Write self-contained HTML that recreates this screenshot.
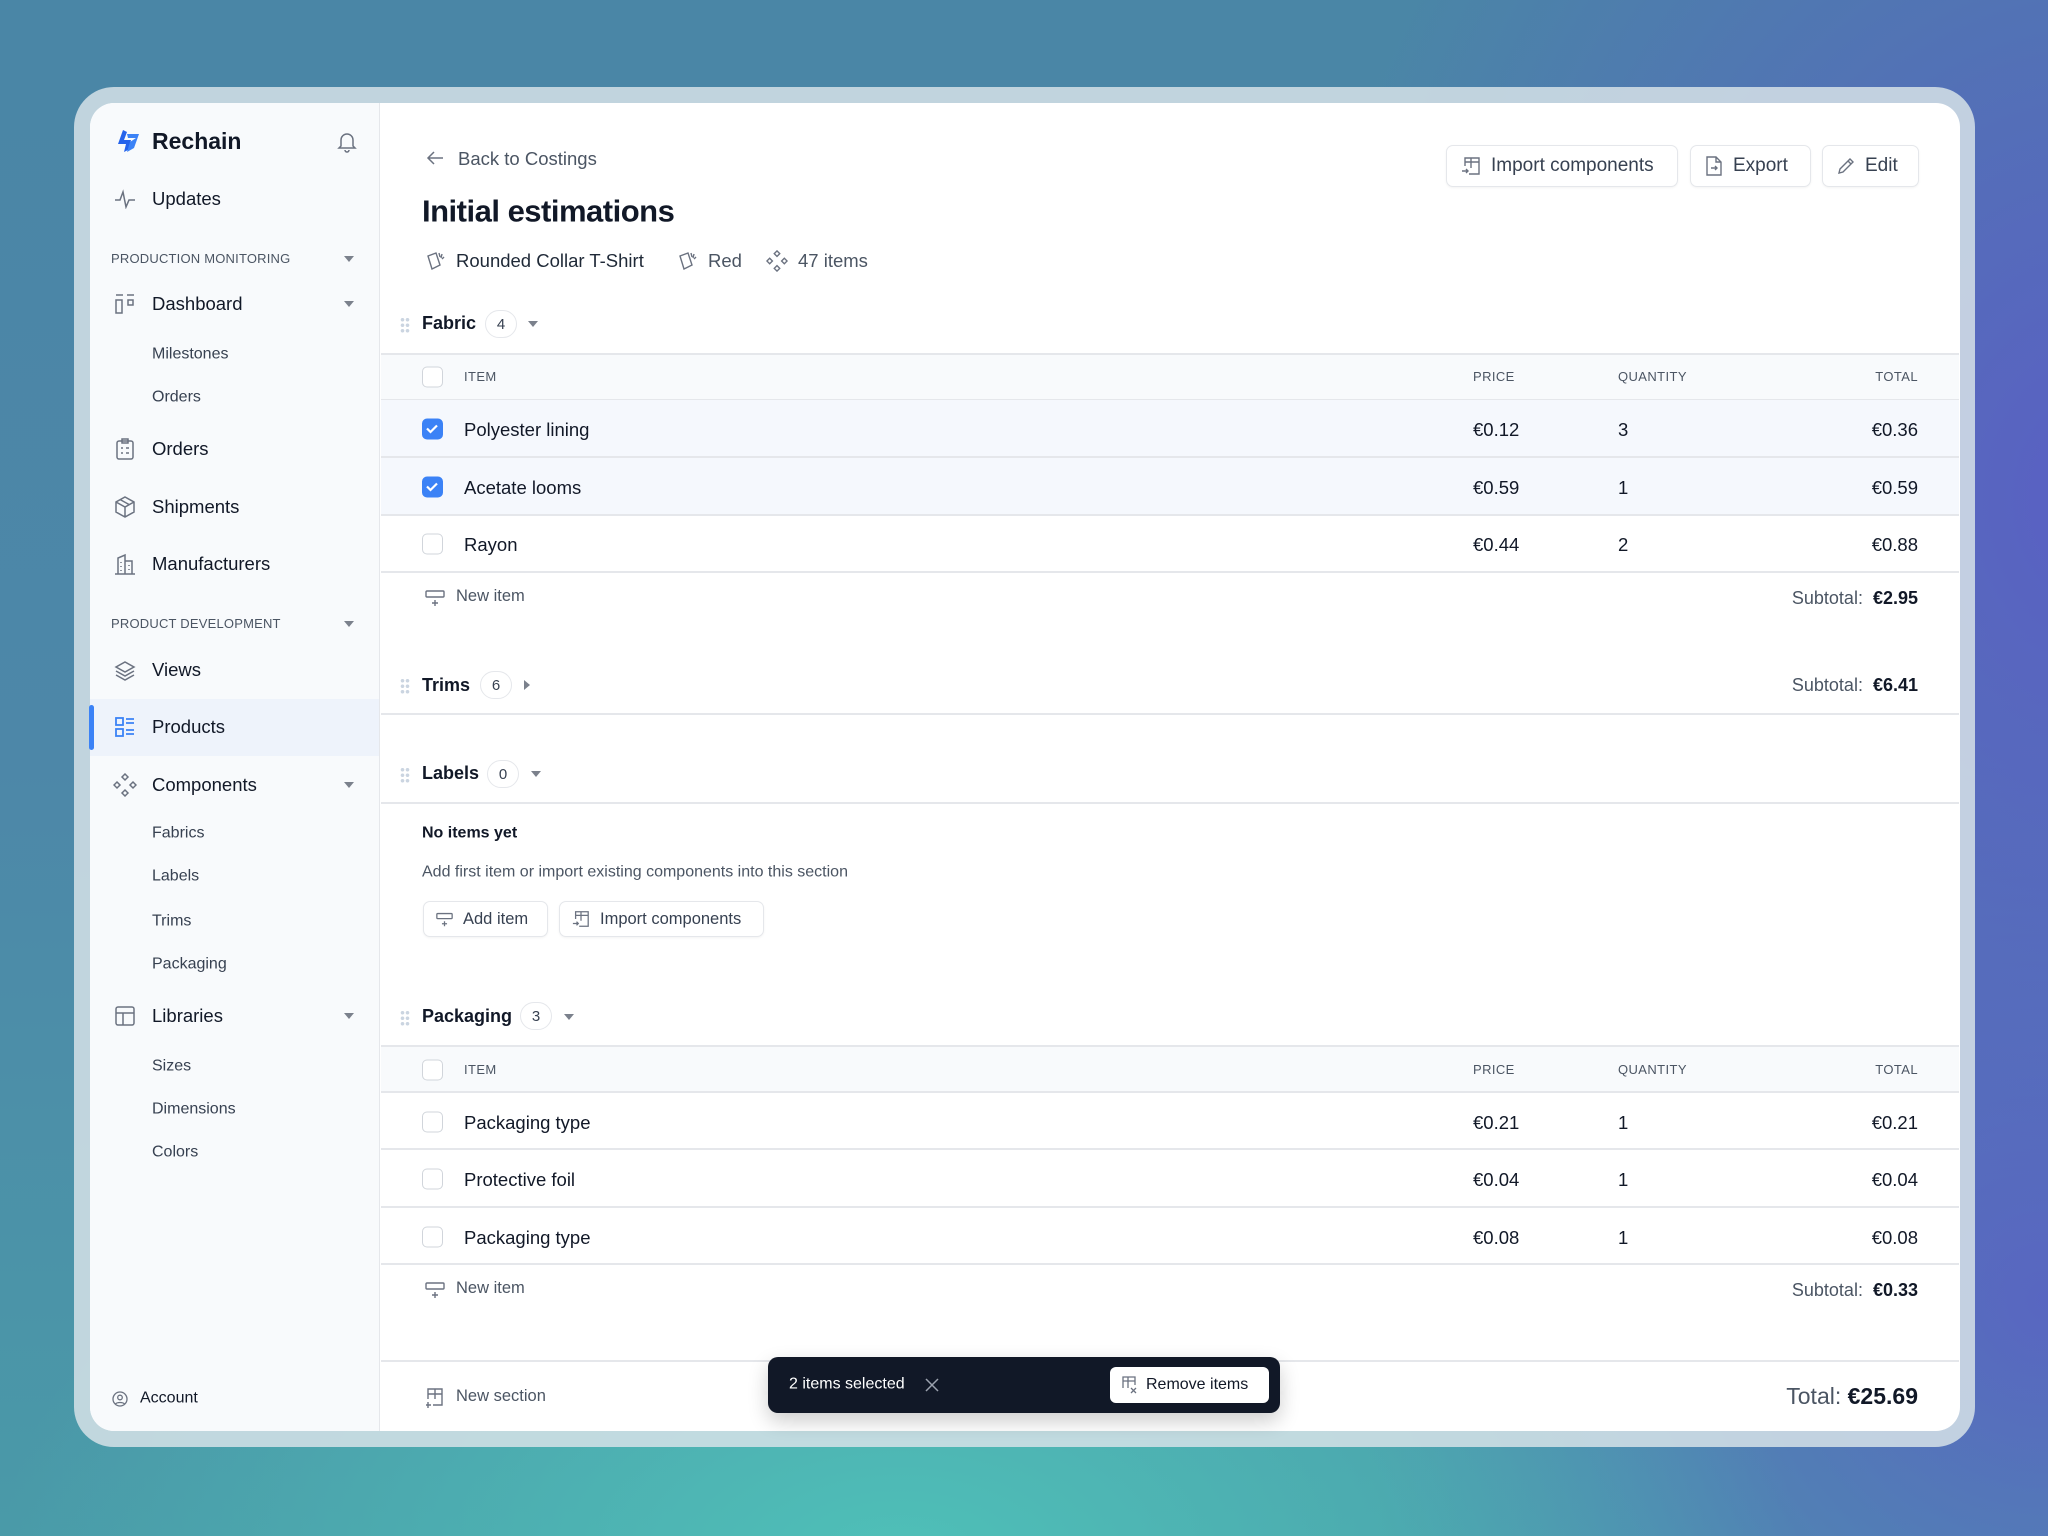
<!DOCTYPE html>
<html><head><meta charset="utf-8"><style>
*{box-sizing:border-box;margin:0;padding:0}
body{width:2048px;height:1536px;overflow:hidden;position:relative;font-family:"Liberation Sans",sans-serif;color:#111827;
background:radial-gradient(ellipse 900px 500px at 900px 1560px,#4fc0b8 0%,rgba(79,192,184,0) 100%),
radial-gradient(ellipse 800px 1000px at 2100px 500px,#5a5fc4 0%,rgba(90,95,196,0) 100%),
radial-gradient(ellipse 700px 700px at 2048px 1300px,#5868c0 0%,rgba(88,104,192,0) 100%),
linear-gradient(180deg,#4a86a6 0%,#4d87a8 50%,#4a9aa8 100%);}
.frame{position:absolute;left:74px;top:87px;width:1901px;height:1360px;border-radius:40px;background:rgba(214,226,232,.85);}
.card{position:absolute;left:90px;top:103px;width:1870px;height:1328px;border-radius:24px;background:#fff;overflow:hidden}
.side{position:absolute;left:90px;top:103px;width:290px;height:1328px;background:#f8fafc;border-right:1.5px solid #e5e7eb;border-radius:24px 0 0 24px}
.a{position:absolute;transform:translateY(-50%);white-space:nowrap;line-height:1.2}
.nav{font-size:18.5px;color:#111827;left:152px}
.sub{font-size:16px;color:#374151;left:152px}
.cap{font-size:13px;color:#4b5563;left:111px;letter-spacing:.2px}
.ic{position:absolute;transform:translateY(-50%)}
.car{position:absolute;width:0;height:0;border-left:5px solid transparent;border-right:5px solid transparent;border-top:6px solid #7b818c}
.hl{position:absolute;background:#e5e7eb;height:1.5px}
.btn{position:absolute;border:1.5px solid #e5e7eb;border-radius:7px;background:#fff;box-shadow:0 1px 2px rgba(0,0,0,.05);color:#374151;font-size:19px;display:flex;align-items:center;gap:10px;padding-left:14px}
.cb{position:absolute;width:21px;height:21px;border:1.5px solid #d1d5db;border-radius:5px;background:#fff;transform:translateY(-50%)}
.cb.on{background:#3b82f6;border-color:#3b82f6}
.sec{font-size:18px;font-weight:bold;left:422px}
.badge{position:absolute;transform:translateY(-50%);height:28px;border:1.5px solid #e5e7eb;border-radius:14px;font-size:15px;color:#374151;display:flex;align-items:center;justify-content:center;background:#fff}
.th{font-size:13px;color:#4b5563;letter-spacing:.4px}
.td{font-size:18.5px;color:#111827}
.r{right:130px}
.grip{position:absolute;transform:translateY(-50%);width:10px;height:16px;background:radial-gradient(circle,#cbd5e1 1.6px,transparent 2px) 0 0/5px 5.5px}
</style></head><body>
<div class="frame"></div>
<div class="card"></div>
<div class="side"></div>

<svg class="ic" style="left:115px;top:142px" width="26" height="28" viewBox="0 0 26 28"><path d="M8 2 L3 16 L11 16 L9 24 L13 22 L16 12 L9 12 L12 4 Z" fill="#2563eb"/><path d="M12 6 L24 6 L19 20 L12 24 L15 14 L21 10 L13 10Z" fill="#3b82f6"/></svg>
<div class="a" style="left:152px;top:142px;font-size:23px;font-weight:bold;color:#111827">Rechain</div>
<svg class="ic" style="left:337px;top:142px" width="20" height="22" viewBox="0 0 20 22" fill="none" stroke="#6b7280" stroke-width="1.5"><path d="M4 15V9a6 6 0 0 1 12 0v6l2 2H2z"/><path d="M8 19a2 2 0 0 0 4 0"/></svg>

<svg class="ic" style="left:114px;top:199px" width="22" height="20" viewBox="0 0 22 20" fill="none" stroke="#6b7280" stroke-width="1.5"><path d="M1 11h5l3-8 3 15 3-7h6"/></svg>
<div class="a nav" style="top:199px">Updates</div>

<div class="a cap" style="top:259px">PRODUCTION MONITORING</div><div class="car" style="left:344px;top:256px"></div>
<svg class="ic" style="left:114px;top:304px" width="22" height="22" viewBox="0 0 22 22" fill="none" stroke="#6b7280" stroke-width="1.5"><path d="M2 2h7M13 2h7M2 7h6v13H2zM14 7h5v5h-5z"/></svg>
<div class="a nav" style="top:304px">Dashboard</div><div class="car" style="left:344px;top:301px"></div>
<div class="a sub" style="top:354px">Milestones</div>
<div class="a sub" style="top:397px">Orders</div>
<svg class="ic" style="left:115px;top:449px" width="20" height="22" viewBox="0 0 20 22" fill="none" stroke="#6b7280" stroke-width="1.5"><rect x="2" y="3" width="16" height="18" rx="2"/><path d="M7 1h6v4H7zM6 10h2M11 10h3M6 15h2M11 15h3"/></svg>
<div class="a nav" style="top:449px">Orders</div>
<svg class="ic" style="left:114px;top:507px" width="22" height="22" viewBox="0 0 22 22" fill="none" stroke="#6b7280" stroke-width="1.5"><path d="M11 1l9 5v10l-9 5-9-5V6zM2 6l9 5 9-5M11 11v10M6 3.5l9 5"/></svg>
<div class="a nav" style="top:507px">Shipments</div>
<svg class="ic" style="left:114px;top:564px" width="22" height="22" viewBox="0 0 22 22" fill="none" stroke="#6b7280" stroke-width="1.5"><path d="M1 21h20M4 21V5l7-3v19M11 8h7v13M7 9v1M7 13v1M7 17v1M15 12v1M15 16v1"/></svg>
<div class="a nav" style="top:564px">Manufacturers</div>

<div class="a cap" style="top:624px">PRODUCT DEVELOPMENT</div><div class="car" style="left:344px;top:621px"></div>
<svg class="ic" style="left:114px;top:670px" width="22" height="22" viewBox="0 0 22 22" fill="none" stroke="#6b7280" stroke-width="1.5"><path d="M11 3l9 5-9 5-9-5zM2 12l9 5 9-5M2 16l9 5 9-5"/></svg>
<div class="a nav" style="top:670px">Views</div>
<div style="position:absolute;left:90px;top:699px;width:289px;height:57px;background:#eef3fb"></div>
<div style="position:absolute;left:89px;top:705px;width:5px;height:45px;background:#3b82f6;border-radius:3px"></div>
<svg class="ic" style="left:114px;top:727px" width="22" height="22" viewBox="0 0 22 22" fill="none" stroke="#3b82f6" stroke-width="1.8"><rect x="2" y="2" width="7" height="7"/><rect x="2" y="13" width="7" height="7"/><path d="M12 3h8M12 7h8M12 14h8M12 18h8"/></svg>
<div class="a nav" style="top:727px">Products</div>
<svg class="ic" style="left:113px;top:785px" width="24" height="24" viewBox="0 0 24 24" fill="none" stroke="#6b7280" stroke-width="1.5"><path d="M12 1l3 3-3 3-3-3zM12 17l3 3-3 3-3-3zM4 9l3 3-3 3-3-3zM20 9l3 3-3 3-3-3z"/></svg>
<div class="a nav" style="top:785px">Components</div><div class="car" style="left:344px;top:782px"></div>
<div class="a sub" style="top:833px">Fabrics</div>
<div class="a sub" style="top:876px">Labels</div>
<div class="a sub" style="top:921px">Trims</div>
<div class="a sub" style="top:964px">Packaging</div>
<svg class="ic" style="left:115px;top:1016px" width="20" height="20" viewBox="0 0 20 20" fill="none" stroke="#6b7280" stroke-width="1.5"><rect x="1" y="1" width="18" height="18" rx="2"/><path d="M1 7h18M8 7v12"/></svg>
<div class="a nav" style="top:1016px">Libraries</div><div class="car" style="left:344px;top:1013px"></div>
<div class="a sub" style="top:1066px">Sizes</div>
<div class="a sub" style="top:1109px">Dimensions</div>
<div class="a sub" style="top:1152px">Colors</div>
<svg class="ic" style="left:112px;top:1399px" width="16" height="16" viewBox="0 0 16 16" fill="none" stroke="#6b7280" stroke-width="1.3"><circle cx="8" cy="8" r="7"/><circle cx="8" cy="6.5" r="2.3"/><path d="M3.5 13c1.5-2 7.5-2 9 0"/></svg>
<div class="a" style="left:140px;top:1398px;font-size:16px;color:#111827">Account</div>

<svg class="ic" style="left:426px;top:158px" width="18" height="16" viewBox="0 0 18 16" fill="none" stroke="#6b7280" stroke-width="1.5"><path d="M17 8H2M8 2L2 8l6 6"/></svg>
<div class="a" style="left:458px;top:159px;font-size:18.5px;color:#4b5563">Back to Costings</div>
<div class="a" style="left:422px;top:211px;font-size:31px;font-weight:bold;color:#111827;letter-spacing:-.5px">Initial estimations</div>

<div class="btn" style="left:1446px;top:145px;width:232px;height:42px"><svg width="20" height="20" viewBox="0 0 20 20" fill="none" stroke="#6b7280" stroke-width="1.4"><path d="M4 10V2h14v16H8M4 6h14M10 2v10"/><path d="M1 15h6M5 13l2 2-2 2"/></svg>Import components</div>
<div class="btn" style="left:1690px;top:145px;width:121px;height:42px"><svg width="18" height="20" viewBox="0 0 18 20" fill="none" stroke="#6b7280" stroke-width="1.4"><path d="M2 1h9l5 5v13H2zM11 1v5h5M6 12h6M10 10l2 2-2 2"/></svg>Export</div>
<div class="btn" style="left:1822px;top:145px;width:97px;height:42px"><svg width="18" height="18" viewBox="0 0 18 18" fill="none" stroke="#6b7280" stroke-width="1.4"><path d="M2 16l1-4L13 2l3 3L6 15zM11 4l3 3"/></svg>Edit</div>

<svg class="ic" style="left:425px;top:261px" width="22" height="20" viewBox="0 0 22 20" fill="none" stroke="#6b7280" stroke-width="1.4"><path d="M3 5l8-3 4 12-8 4zM14 2l1 4M17 3l-1 4M19 6l-2 2"/></svg>
<div class="a" style="left:456px;top:261px;font-size:18.5px;color:#1f2937">Rounded Collar T-Shirt</div>
<svg class="ic" style="left:677px;top:261px" width="22" height="20" viewBox="0 0 22 20" fill="none" stroke="#6b7280" stroke-width="1.4"><path d="M3 5l8-3 4 12-8 4zM14 2l1 4M17 3l-1 4M19 6l-2 2"/></svg>
<div class="a" style="left:708px;top:261px;font-size:18.5px;color:#4b5563">Red</div>
<svg class="ic" style="left:766px;top:261px" width="22" height="22" viewBox="0 0 24 24" fill="none" stroke="#6b7280" stroke-width="1.5"><path d="M12 1l3 3-3 3-3-3zM12 17l3 3-3 3-3-3zM4 9l3 3-3 3-3-3zM20 9l3 3-3 3-3-3z"/></svg>
<div class="a" style="left:798px;top:261px;font-size:18.5px;color:#4b5563">47 items</div>

<div class="grip" style="left:400px;top:325px"></div>
<div class="a sec" style="top:324px">Fabric</div>
<div class="badge" style="left:485px;top:324px;width:32px">4</div>
<div class="car" style="left:528px;top:321px"></div>
<div style="position:absolute;left:381px;top:354px;width:1578px;height:46px;background:#f8fafc"></div>
<div class="hl" style="left:381px;top:353px;width:1578px"></div>
<div class="hl" style="left:381px;top:399px;width:1578px"></div>
<div class="cb" style="left:422px;top:377px"></div>
<div class="a th" style="left:464px;top:377px">ITEM</div>
<div class="a th" style="left:1473px;top:377px">PRICE</div>
<div class="a th" style="left:1618px;top:377px">QUANTITY</div>
<div class="a th r" style="top:377px">TOTAL</div>

<div style="position:absolute;left:381px;top:400px;width:1578px;height:114px;background:#f5f8fd"></div>
<div class="hl" style="left:381px;top:456px;width:1578px"></div>
<div class="hl" style="left:381px;top:514px;width:1578px"></div>
<div class="hl" style="left:381px;top:571px;width:1578px"></div>

<div class="cb on" style="left:422px;top:429px"><svg width="18" height="18" viewBox="0 0 18 18" fill="none" stroke="#fff" stroke-width="2.2"><path d="M4 9l3.5 3.5L14 6"/></svg></div>
<div class="a td" style="left:464px;top:430px">Polyester lining</div>
<div class="a td" style="left:1473px;top:430px">€0.12</div>
<div class="a td" style="left:1618px;top:430px">3</div>
<div class="a td r" style="top:430px">€0.36</div>

<div class="cb on" style="left:422px;top:487px"><svg width="18" height="18" viewBox="0 0 18 18" fill="none" stroke="#fff" stroke-width="2.2"><path d="M4 9l3.5 3.5L14 6"/></svg></div>
<div class="a td" style="left:464px;top:488px">Acetate looms</div>
<div class="a td" style="left:1473px;top:488px">€0.59</div>
<div class="a td" style="left:1618px;top:488px">1</div>
<div class="a td r" style="top:488px">€0.59</div>

<div class="cb" style="left:422px;top:544px"></div>
<div class="a td" style="left:464px;top:545px">Rayon</div>
<div class="a td" style="left:1473px;top:545px">€0.44</div>
<div class="a td" style="left:1618px;top:545px">2</div>
<div class="a td r" style="top:545px">€0.88</div>

<svg class="ic" style="left:425px;top:598px" width="20" height="20" viewBox="0 0 20 20" fill="none" stroke="#6b7280" stroke-width="1.4"><rect x="1" y="3" width="18" height="6" rx="1"/><path d="M10 12v6M7 15h6"/></svg>
<div class="a" style="left:456px;top:597px;font-size:16.5px;color:#4b5563">New item</div>
<div class="a" style="right:130px;top:599px;font-size:18px;color:#4b5563">Subtotal:&nbsp;&nbsp;<b style="color:#111827">€2.95</b></div>

<div class="grip" style="left:400px;top:686px"></div>
<div class="a sec" style="top:686px">Trims</div>
<div class="badge" style="left:480px;top:685px;width:32px">6</div>
<div style="position:absolute;left:524px;top:680px;border-top:5px solid transparent;border-bottom:5px solid transparent;border-left:6px solid #7b818c"></div>
<div class="a" style="right:130px;top:686px;font-size:18px;color:#4b5563">Subtotal:&nbsp;&nbsp;<b style="color:#111827">€6.41</b></div>
<div class="hl" style="left:381px;top:713px;width:1578px"></div>

<div class="grip" style="left:400px;top:775px"></div>
<div class="a sec" style="top:774px">Labels</div>
<div class="badge" style="left:487px;top:774px;width:32px">0</div>
<div class="car" style="left:531px;top:771px"></div>
<div class="hl" style="left:381px;top:802px;width:1578px"></div>
<div class="a" style="left:422px;top:833px;font-size:16px;font-weight:bold;color:#111827">No items yet</div>
<div class="a" style="left:422px;top:872px;font-size:16px;color:#4b5563">Add first item or import existing components into this section</div>
<div class="btn" style="left:423px;top:901px;width:125px;height:36px;font-size:16.5px;padding-left:12px"><svg width="17" height="17" viewBox="0 0 20 20" fill="none" stroke="#6b7280" stroke-width="1.5"><rect x="1" y="3" width="18" height="6" rx="1"/><path d="M10 12v6M7 15h6"/></svg>Add item</div>
<div class="btn" style="left:559px;top:901px;width:205px;height:36px;font-size:16.5px;padding-left:12px"><svg width="18" height="18" viewBox="0 0 20 20" fill="none" stroke="#6b7280" stroke-width="1.4"><path d="M4 10V2h14v16H8M4 6h14M10 2v10"/><path d="M1 15h6M5 13l2 2-2 2"/></svg>Import components</div>

<div class="grip" style="left:400px;top:1018px"></div>
<div class="a sec" style="top:1017px">Packaging</div>
<div class="badge" style="left:520px;top:1016px;width:32px">3</div>
<div class="car" style="left:564px;top:1014px"></div>
<div style="position:absolute;left:381px;top:1046px;width:1578px;height:46px;background:#f8fafc"></div>
<div class="hl" style="left:381px;top:1045px;width:1578px"></div>
<div class="hl" style="left:381px;top:1091px;width:1578px"></div>
<div class="cb" style="left:422px;top:1070px"></div>
<div class="a th" style="left:464px;top:1070px">ITEM</div>
<div class="a th" style="left:1473px;top:1070px">PRICE</div>
<div class="a th" style="left:1618px;top:1070px">QUANTITY</div>
<div class="a th r" style="top:1070px">TOTAL</div>
<div class="hl" style="left:381px;top:1148px;width:1578px"></div>
<div class="hl" style="left:381px;top:1206px;width:1578px"></div>
<div class="hl" style="left:381px;top:1263px;width:1578px"></div>

<div class="cb" style="left:422px;top:1122px"></div>
<div class="a td" style="left:464px;top:1123px">Packaging type</div>
<div class="a td" style="left:1473px;top:1123px">€0.21</div>
<div class="a td" style="left:1618px;top:1123px">1</div>
<div class="a td r" style="top:1123px">€0.21</div>
<div class="cb" style="left:422px;top:1179px"></div>
<div class="a td" style="left:464px;top:1180px">Protective foil</div>
<div class="a td" style="left:1473px;top:1180px">€0.04</div>
<div class="a td" style="left:1618px;top:1180px">1</div>
<div class="a td r" style="top:1180px">€0.04</div>
<div class="cb" style="left:422px;top:1237px"></div>
<div class="a td" style="left:464px;top:1238px">Packaging type</div>
<div class="a td" style="left:1473px;top:1238px">€0.08</div>
<div class="a td" style="left:1618px;top:1238px">1</div>
<div class="a td r" style="top:1238px">€0.08</div>

<svg class="ic" style="left:425px;top:1290px" width="20" height="20" viewBox="0 0 20 20" fill="none" stroke="#6b7280" stroke-width="1.4"><rect x="1" y="3" width="18" height="6" rx="1"/><path d="M10 12v6M7 15h6"/></svg>
<div class="a" style="left:456px;top:1289px;font-size:16.5px;color:#4b5563">New item</div>
<div class="a" style="right:130px;top:1291px;font-size:18px;color:#4b5563">Subtotal:&nbsp;&nbsp;<b style="color:#111827">€0.33</b></div>

<div style="position:absolute;left:381px;top:1360px;width:1578px;height:2px;background:#e5e7eb"></div>
<svg class="ic" style="left:425px;top:1398px" width="20" height="22" viewBox="0 0 20 22" fill="none" stroke="#6b7280" stroke-width="1.4"><path d="M3 12V2h14v16H8M3 7h14M10 2v10M3 15v6M1 18h5"/></svg>
<div class="a" style="left:456px;top:1397px;font-size:16.5px;color:#4b5563">New section</div>
<div class="a" style="right:130px;top:1397px;font-size:23px;color:#4b5563">Total:&nbsp;<b style="color:#111827">€25.69</b></div>

<div style="position:absolute;left:768px;top:1357px;width:512px;height:56px;background:#111827;border-radius:10px;box-shadow:0 8px 20px rgba(0,0,0,.2)"></div>
<div class="a" style="left:789px;top:1384px;font-size:16px;color:#fff">2 items selected</div>
<svg class="ic" style="left:924px;top:1385px" width="16" height="16" viewBox="0 0 16 16" fill="none" stroke="#9ca3af" stroke-width="1.5"><path d="M2 2l12 12M14 2L2 14"/></svg>
<div style="position:absolute;left:1110px;top:1367px;width:159px;height:36px;background:#fff;border-radius:6px;display:flex;align-items:center;gap:8px;padding-left:12px;font-size:16px;color:#111827"><svg width="16" height="18" viewBox="0 0 16 18" fill="none" stroke="#6b7280" stroke-width="1.3"><path d="M1 12V1h12v8M1 5h12M6 1v11M9 12l5 5M14 12l-5 5"/></svg>Remove items</div>
</body></html>
